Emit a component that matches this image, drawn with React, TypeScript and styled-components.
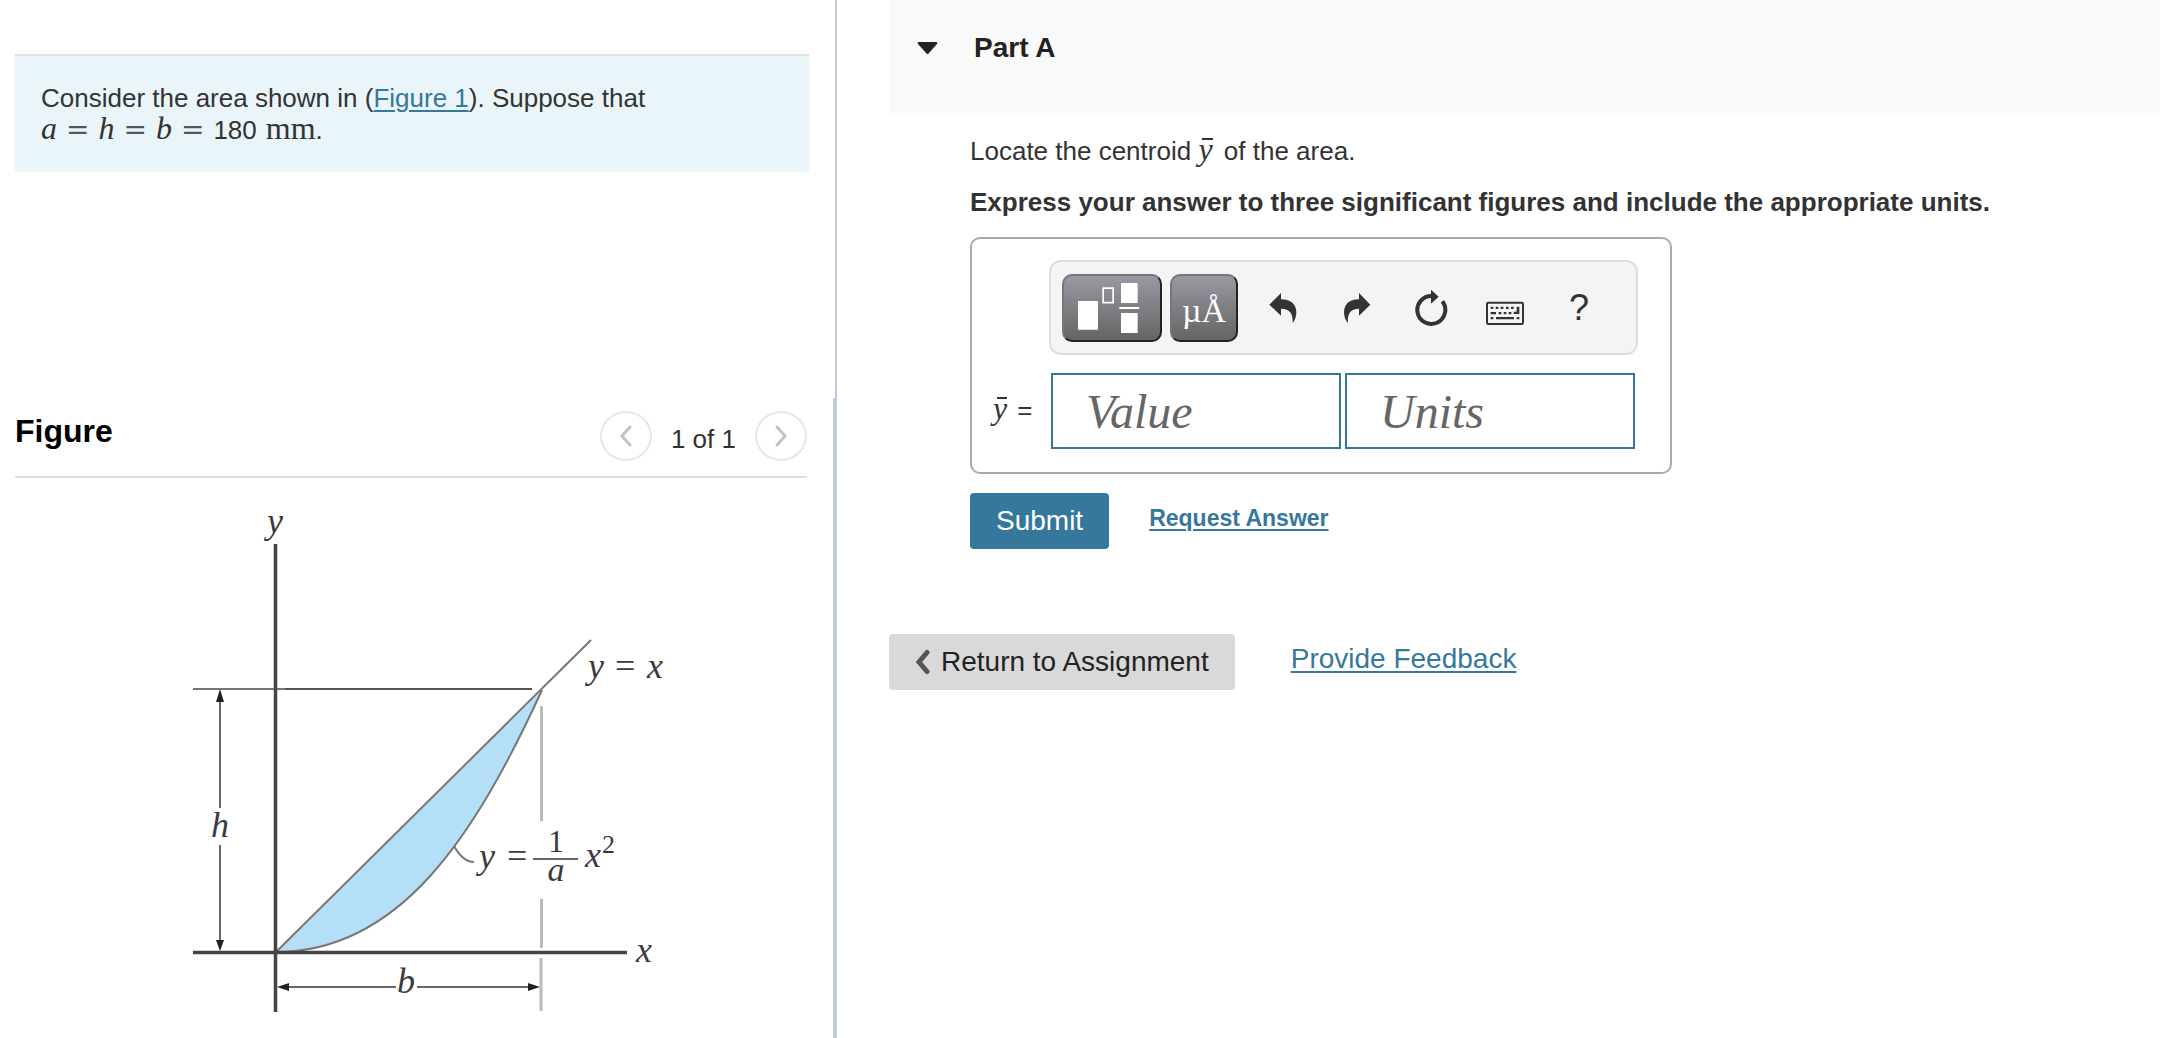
import React from "react";
import styled, { createGlobalStyle } from "styled-components";

const sans = `"Liberation Sans", Arial, Helvetica, sans-serif`;
const serif = `"Liberation Serif", "Times New Roman", Times, serif`;
const blue = "#36789b";

const GlobalStyle = createGlobalStyle`
  *, *::before, *::after { box-sizing: border-box; }
  body { margin: 0; background: #fff; color: #333; font: 26px/32px ${sans}; }
  h2, h3, p { margin: 0; }
  button, input { font-family: inherit; color: inherit; margin: 0; }
`;

const Page = styled.div`
  display: grid;
  grid-template-columns: 38.75% minmax(0, 1fr);
  min-height: 100vh;
`;

const LeftColumn = styled.aside`
  display: flex;
  flex-direction: column;
`;

const IntroPane = styled.section`
  min-height: 398px;
  padding: 54px 26px 0 15px;
  border-right: 2px solid #bfccda;
`;

const IntroBox = styled.div`
  padding: 26px;
  border-top: 2px solid #dfe2e1;
  background: #e9f5f8;
`;

const FigurePane = styled.section`
  flex: 1;
  padding: 13px 26px 0 15px;
  border-right: 4px solid #bfccda;
`;

const FigureHeader = styled.header`
  display: flex;
  align-items: center;
  justify-content: space-between;
  padding-bottom: 15px;
  border-bottom: 2px solid #ddd;
`;

const FigureTitle = styled.h2`
  padding-bottom: 10px;
  color: #000;
  font-size: 32px;
  line-height: 32px;
`;

const Pager = styled.nav`
  display: flex;
  align-items: center;
  gap: 19px;
`;

const PagerCount = styled.span`
  padding-top: 6px;
`;

const RoundButton = styled.button`
  display: flex;
  align-items: center;
  justify-content: center;
  width: 52px;
  height: 50px;
  padding: 0;
  border: 2px solid #e6e6e6;
  border-radius: 50%;
  background: #fff;
`;

const Diagram = styled.svg`
  display: block;
  width: 100%;
  height: auto;
  font-family: ${serif};
  font-style: italic;
  font-size: 36px;
`;

const Link = styled.a<{ $size?: number; $bold?: boolean }>`
  color: ${blue};
  font-size: ${(p) => p.$size ?? 26}px;
  font-weight: ${(p) => (p.$bold ? 700 : 400)};
  text-decoration: underline;
  text-decoration-thickness: 2px;
  text-underline-offset: 3px;
`;

const ActionLink = styled(Link)`
  padding-bottom: 6px;
`;

const MathLine = styled.span`
  display: flex;
  align-items: baseline;
  gap: 9px;
`;

const MathVar = styled.i`
  font-family: ${serif};
  font-size: 32px;
  line-height: 28px;
`;

const MathEquals = styled.span`
  font-family: "DejaVu Sans", ${sans};
  font-size: 28px;
  line-height: 28px;
  color: #555;
`;

const MathUnit = styled.span`
  font-family: ${serif};
  font-size: 32px;
  line-height: 28px;
`;

const BarredVar = styled(MathVar)`
  position: relative;
  display: inline-block;
  margin-right: 4px;

  &::before {
    content: "";
    position: absolute;
    top: 3px;
    left: 4px;
    right: 0;
    height: 2px;
    background: currentColor;
  }
`;

const RightColumn = styled.main`
  padding-left: 52px;
`;

const PartHeader = styled.header`
  display: flex;
  align-items: flex-start;
  min-height: 113px;
  padding: 32px 28px;
  background: #f9f9f9;
`;

const PartToggle = styled.button`
  display: flex;
  align-items: center;
  gap: 36px;
  padding: 0;
  border: 0;
  background: none;
  color: #222;
  font-size: 28px;
  font-weight: 700;
  line-height: 32px;
`;

const PartBody = styled.div`
  display: flex;
  flex-direction: column;
  align-items: flex-start;
  gap: 19px;
  padding: 22px 24px 0 81px;
`;

const Instruction = styled.p`
  font-weight: 700;
`;

const AnswerBox = styled.form`
  display: grid;
  grid-template-columns: 56px minmax(0, 1fr);
  row-gap: 18px;
  width: 702px;
  max-width: 100%;
  padding: 21px 32px 23px 21px;
  border: 2px solid #aaa;
  border-radius: 10px;
`;

const Toolbar = styled.div`
  grid-column: 2;
  display: flex;
  align-items: center;
  gap: 8px;
  height: 95px;
  padding: 0 11px;
  border: 2px solid #ddd;
  border-radius: 12px;
  background: #f4f4f4;
`;

const PaletteButton = styled.button<{ $wide?: boolean }>`
  display: flex;
  align-items: center;
  justify-content: center;
  width: ${(p) => (p.$wide ? 100 : 68)}px;
  height: 68px;
  padding: ${(p) => (p.$wide ? "0 6px 0 0" : "6px 0 0")};
  border: 2px solid;
  border-color: #777 #222 #222 #777;
  border-radius: 10px;
  background: linear-gradient(#9b98a3, #646464);
  color: #fff;
  font: 34px/40px ${serif};
`;

const ToolGroup = styled.div`
  display: flex;
`;

const ToolButton = styled.button`
  display: flex;
  align-items: center;
  justify-content: center;
  width: 74px;
  height: 68px;
  padding: 0;
  border: 0;
  background: none;
  color: #333;
  font-size: 36px;
`;

const AnswerLabel = styled.label`
  display: flex;
  align-items: baseline;
  align-self: center;
  gap: 6px;
  padding-bottom: 2px;
`;

const Fields = styled.div`
  display: flex;
  gap: 4px;
  padding: 0 3px 0 2px;
`;

const Field = styled.input`
  flex: 1;
  min-width: 0;
  height: 76px;
  padding: 0 33px;
  border: 2px solid ${blue};
  background: #fff;
  font: italic 48px ${serif};

  &::placeholder {
    color: #666;
    opacity: 1;
  }
`;

const Actions = styled.div<{ $gap: number }>`
  display: flex;
  align-items: center;
  gap: ${(p) => p.$gap}px;
`;

const Button = styled.button<{ $primary?: boolean }>`
  display: flex;
  align-items: center;
  gap: 10px;
  height: 56px;
  padding: 0 26px;
  border: 0;
  border-radius: 4px;
  background: ${(p) => (p.$primary ? blue : "#d9d9d9")};
  color: ${(p) => (p.$primary ? "#fff" : "#222")};
  font-size: 28px;
`;

const Footer = styled.footer`
  padding-top: 85px;
`;

function Chevron({ right = false }: { right?: boolean }) {
  return (
    <svg width="14" height="24" viewBox="0 0 14 24" aria-hidden="true">
      <path
        d={right ? "M3 3L11 12 3 21" : "M11 3L3 12 11 21"}
        fill="none"
        stroke="#c4c4c4"
        strokeWidth="3"
        strokeLinecap="round"
      />
    </svg>
  );
}

function CentroidDiagram() {
  return (
    <Diagram viewBox="15 478 792 550" role="img" aria-label="Area bounded by y = x and y = x squared over a">
      <path d="M276 952C400 952 475 836 542 690Z" fill="#b4dff7" />
      <g fill="none" stroke="#777" strokeWidth="2">
        <path d="M276 952C400 952 475 836 542 690" />
        <path d="M276 952L591 640" />
        <path d="M454 846C459 855 465 862 474 862" />
        <path d="M193 689H285" />
        <path d="M285 689H532" stroke="#555" />
        <path d="M220 700V808M220 845V942M285 987H396M417 987H532" stroke="#666" />
      </g>
      <path d="M541.500 706V821M541.500 899V948M541 958V1011" stroke="#bbb" strokeWidth="3" />
      <path d="M275.500 544V1012M193 952.500H627" stroke="#444" strokeWidth="3.500" />
      <path
        d="M220 689L224 702H216ZM220 951L224 940H216ZM277 987L289 983V991ZM540 987L528 983V991Z"
        fill="#222"
      />
      <path d="M533 859H578" stroke="#666" strokeWidth="2" />
      <g fill="#3a3a3f">
        <text x="267" y="533">y</text>
        <text x="588" y="678">y</text>
        <text x="615" y="678" fontStyle="normal">=</text>
        <text x="647" y="678">x</text>
        <text x="211" y="837">h</text>
        <text x="397" y="993">b</text>
        <text x="636" y="962">x</text>
        <text x="479" y="868">y</text>
        <text x="507" y="868" fontStyle="normal">=</text>
        <text x="556" y="852" fontStyle="normal" fontSize="32" textAnchor="middle">1</text>
        <text x="556" y="881" fontSize="34" textAnchor="middle">a</text>
        <text x="585" y="867">x</text>
        <text x="602" y="853" fontStyle="normal" fontSize="26">2</text>
      </g>
    </Diagram>
  );
}

function TemplateIcon() {
  return (
    <svg width="62" height="50" viewBox="354 168 186 150" aria-hidden="true">
      <path d="M354 222H414V308H354ZM483 168H533V228H483ZM483 258H533V318H483ZM478 240H538V246H478Z" fill="#fff" />
      <path d="M429.500 183.500H459.500V227H429.500Z" fill="none" stroke="#fff" strokeWidth="5" />
    </svg>
  );
}

function UndoIcon() {
  return (
    <svg width="28" height="30" viewBox="919 200 84 90" aria-hidden="true">
      <path d="M920 235L955 200V219C985 219 1001 235 1001 258C1001 272 996 283 990 290C991 268 986 247 955 247V268Z" fill="currentColor" />
    </svg>
  );
}

function RedoIcon() {
  return (
    <svg width="28" height="30" viewBox="161 200 84 90" aria-hidden="true">
      <path d="M243 235L209 200V219C179 219 164 235 164 258C164 272 169 283 176 290C174 268 179 247 209 247V268Z" fill="currentColor" />
    </svg>
  );
}

function ResetIcon() {
  return (
    <svg width="34" height="38" viewBox="369 190 102 114" aria-hidden="true">
      <path d="M454 227A42 42 0 1 1 424 211" fill="none" stroke="currentColor" strokeWidth="12" />
      <path d="M420 192L443 213L420 234Z" fill="currentColor" />
    </svg>
  );
}

function KeyboardIcon() {
  return (
    <svg width="40" height="36" viewBox="582 192 120 108" aria-hidden="true">
      <rect x="588" y="230" width="108" height="64" rx="4" fill="none" stroke="currentColor" strokeWidth="6" />
      <path
        d="M599 242h8v7h-8zM614 242h8v7h-8zM629 242h8v7h-8zM645 242h8v7h-8zM660 242h8v7h-8zM677 242h8v22h-17v-7h9zM599 258h16v7h-16zM623 258h8v7h-8zM638 258h8v7h-8zM653 258h8v7h-8zM599 273h8v7h-8zM615 273h54v7h-54zM677 273h8v7h-8z"
        fill="currentColor"
      />
    </svg>
  );
}

export default function App() {
  return (
    <>
      <GlobalStyle />
      <Page>
        <LeftColumn>
          <IntroPane>
            <IntroBox>
              <p>
                Consider the area shown in (<Link href="#figure">Figure 1</Link>). Suppose that
              </p>
              <MathLine>
                <MathVar>a</MathVar>
                <MathEquals>=</MathEquals>
                <MathVar>h</MathVar>
                <MathEquals>=</MathEquals>
                <MathVar>b</MathVar>
                <MathEquals>=</MathEquals>
                <span>180</span>
                <span>
                  <MathUnit>mm</MathUnit>.
                </span>
              </MathLine>
            </IntroBox>
          </IntroPane>
          <FigurePane id="figure">
            <FigureHeader>
              <FigureTitle>Figure</FigureTitle>
              <Pager aria-label="Figures">
                <RoundButton type="button" aria-label="Previous figure">
                  <Chevron />
                </RoundButton>
                <PagerCount>1 of 1</PagerCount>
                <RoundButton type="button" aria-label="Next figure">
                  <Chevron right />
                </RoundButton>
              </Pager>
            </FigureHeader>
            <CentroidDiagram />
          </FigurePane>
        </LeftColumn>

        <RightColumn>
          <PartHeader>
            <h3>
              <PartToggle type="button" aria-expanded="true">
                <svg width="21" height="12" viewBox="0 0 21 12" aria-hidden="true">
                  <path d="M1.500 0H19.500Q21 .5 20 2L11.500 11.500Q10.500 12.500 9.500 11.500L1 2Q0 .5 1.500 0Z" fill="#222" />
                </svg>
                Part A
              </PartToggle>
            </h3>
          </PartHeader>
          <PartBody>
            <p>
              Locate the centroid <BarredVar>y</BarredVar> of the area.
            </p>
            <Instruction>
              Express your answer to three significant figures and include the appropriate units.
            </Instruction>
            <AnswerBox id="answer" onSubmit={(e) => e.preventDefault()}>
              <Toolbar role="toolbar" aria-label="Math tools">
                <PaletteButton type="button" $wide aria-label="Templates">
                  <TemplateIcon />
                </PaletteButton>
                <PaletteButton type="button">µÅ</PaletteButton>
                <ToolGroup>
                  <ToolButton type="button" aria-label="Undo">
                    <UndoIcon />
                  </ToolButton>
                  <ToolButton type="button" aria-label="Redo">
                    <RedoIcon />
                  </ToolButton>
                  <ToolButton type="button" aria-label="Reset">
                    <ResetIcon />
                  </ToolButton>
                  <ToolButton type="button" aria-label="Keyboard shortcuts">
                    <KeyboardIcon />
                  </ToolButton>
                  <ToolButton type="button">?</ToolButton>
                </ToolGroup>
              </Toolbar>
              <AnswerLabel htmlFor="value">
                <BarredVar>y</BarredVar>
                <span>=</span>
              </AnswerLabel>
              <Fields>
                <Field id="value" placeholder="Value" />
                <Field aria-label="Units" placeholder="Units" />
              </Fields>
            </AnswerBox>
            <Actions $gap={40}>
              <Button type="submit" form="answer" $primary>
                Submit
              </Button>
              <ActionLink href="#request" $size={23} $bold>
                Request Answer
              </ActionLink>
            </Actions>
          </PartBody>
          <Footer>
            <Actions $gap={56}>
              <Button type="button">
                <svg width="16" height="26" viewBox="0 0 16 26" aria-hidden="true">
                  <path d="M12 3.500L4 13L12 22.500" fill="none" stroke="#555" strokeWidth="5" strokeLinecap="round" />
                </svg>
                Return to Assignment
              </Button>
              <ActionLink href="#feedback" $size={28}>
                Provide Feedback
              </ActionLink>
            </Actions>
          </Footer>
        </RightColumn>
      </Page>
    </>
  );
}
